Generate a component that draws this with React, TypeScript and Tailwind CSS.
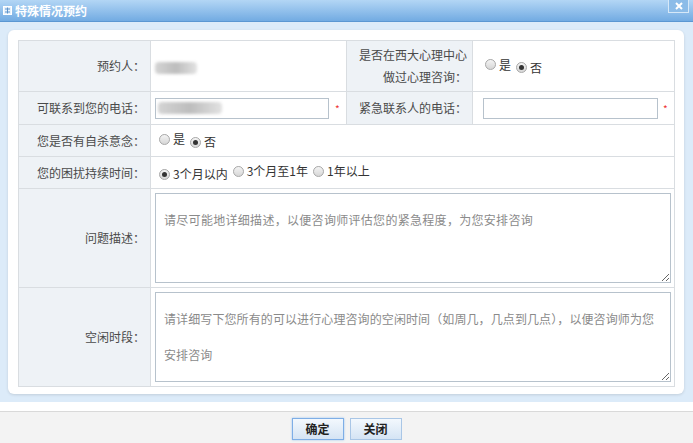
function Radio({ checked, label }: { checked?: boolean; label: string }) {
  return (
    <label className="inline-flex items-center mr-[5px]">
      <span className="w-[11px] h-[11px] rounded-full border border-[#a9a9a9] bg-gradient-to-b from-[#f4f4f4] to-[#d6d6d6] flex items-center justify-center mr-[3px]">
        {checked && <span className="w-[5px] h-[5px] rounded-full bg-[#333]" />}
      </span>
      <span>{label}</span>
    </label>
  );
}

function Blur({ w }: { w: number }) {
  return (
    <span
      className="inline-block h-[12px] bg-gradient-to-r from-[#d4d4d4] via-[#bdbdbd] to-[#e2e2e2] blur-[1.5px] rounded-sm align-middle"
      style={{ width: w }}
    />
  );
}

export default function App() {
  const label = 'bg-[#eef2f6] border border-[#d9dde1] text-right pr-[5px] text-[#4a4a4a]';
  const cell = 'border border-[#d9dde1] pl-[4px] text-[#333]';
  const area =
    'block w-[516px] h-[90px] border border-[#b7c2cc] px-[8px] py-[8px] leading-[36px] text-[12px] outline-none resize-y placeholder:text-[#8a8a8a]';

  return (
    <div
      className="w-[693px] h-[443px] flex flex-col bg-[#f3f3f3] text-[12px] overflow-hidden"
      style={{ fontFamily: '"Noto Sans CJK SC", "Noto Sans", sans-serif' }}
    >
      {/* title bar */}
      <div className="h-[22px] shrink-0 flex items-center justify-between bg-gradient-to-b from-[#b3d6f5] to-[#72abe2] border-b border-[#5b97d2] pl-[3px] pr-[4px]">
        <div className="flex items-center gap-[3px]">
          <svg width="9" height="9" viewBox="0 0 9 9">
            <rect x="0.5" y="0.5" width="8" height="8" fill="#e8f2fc" stroke="#fff" />
            <path d="M2 3h5M2 6h5M4.5 1.5v6" stroke="#5d94cc" strokeWidth="1" />
          </svg>
          <span className="text-white font-bold text-[12px] leading-none">特殊情况预约</span>
        </div>
        <div className="self-start w-[21px] h-[13px] border border-[#d6e8f8] border-t-0 bg-[#8cbce8] flex items-center justify-center">
          <svg width="8" height="8" viewBox="0 0 8 8">
            <path d="M1 1L7 7M7 1L1 7" stroke="#fff" strokeWidth="2" />
          </svg>
        </div>
      </div>

      {/* body */}
      <div className="h-[380px] shrink-0 bg-[#dcebf9] pl-[8px] pr-[9px] pt-[8px] pb-[8px]">
        <div className="h-full bg-white rounded-[6px] shadow-[0_1px_3px_rgba(0,0,0,0.12)] px-[10px] pt-[10px]">
          <table className="w-[656px] border-collapse table-fixed">
            <colgroup>
              <col className="w-[132px]" />
              <col className="w-[196px]" />
              <col className="w-[126px]" />
              <col className="w-[202px]" />
            </colgroup>
            <tbody>
              <tr className="h-[51px]">
                <td className={label}>预约人：</td>
                <td className={cell}>
                  <Blur w={42} />
                </td>
                <td className={label + ' leading-[22px]'}>
                  是否在西大心理中心
                  <br />
                  做过心理咨询：
                </td>
                <td className={cell + ' pl-[12px]'}>
                  <Radio label="是" />
                  <Radio checked label="否" />
                </td>
              </tr>
              <tr className="h-[33px]">
                <td className={label}>可联系到您的电话：</td>
                <td className={cell}>
                  <div className="flex items-center">
                    <div className="w-[174px] h-[21px] border border-[#b7c2cc] flex items-center pl-[2px]">
                      <Blur w={64} />
                    </div>
                    <span className="text-[#e33] text-[10px] ml-[6px]">*</span>
                  </div>
                </td>
                <td className={label}>紧急联系人的电话：</td>
                <td className={cell + ' pl-[10px]'}>
                  <div className="flex items-center">
                    <input className="w-[175px] h-[21px] border border-[#b7c2cc] outline-none" />
                    <span className="text-[#e33] text-[10px] ml-[5px]">*</span>
                  </div>
                </td>
              </tr>
              <tr className="h-[32px]">
                <td className={label}>您是否有自杀意念：</td>
                <td className={cell + ' pl-[8px]'} colSpan={3}>
                  <Radio label="是" />
                  <Radio checked label="否" />
                </td>
              </tr>
              <tr className="h-[32px]">
                <td className={label}>您的困扰持续时间：</td>
                <td className={cell + ' pl-[8px]'} colSpan={3}>
                  <Radio checked label="3个月以内" />
                  <Radio label="3个月至1年" />
                  <Radio label="1年以上" />
                </td>
              </tr>
              <tr className="h-[98px]">
                <td className={label}>问题描述：</td>
                <td className={cell + ' py-[4px]'} colSpan={3}>
                  <textarea
                    className={area + ' tracking-[0.3px]'}
                    placeholder="请尽可能地详细描述，以便咨询师评估您的紧急程度，为您安排咨询"
                  />
                </td>
              </tr>
              <tr className="h-[98px]">
                <td className={label}>空闲时段：</td>
                <td className={cell + ' py-[4px]'} colSpan={3}>
                  <textarea
                    className={area + ' tracking-[0.1px]'}
                    placeholder="请详细写下您所有的可以进行心理咨询的空闲时间（如周几，几点到几点），以便咨询师为您安排咨询"
                  />
                </td>
              </tr>
            </tbody>
          </table>
        </div>
      </div>

      {/* footer */}
      <div className="h-[10px] shrink-0 bg-white border-b border-[#d9d9d9]" />
      <div className="flex-1 flex justify-center items-start pt-[6px] gap-[6px]">
        <button className="w-[52px] h-[22px] border border-[#7eaee6] shadow-[0_0_2px_#9cc3ef] bg-gradient-to-b from-[#f3f8fd] to-[#d5e4f4] text-[#222] text-[12px] font-bold">
          确定
        </button>
        <button className="w-[52px] h-[22px] border border-[#a9c6e6] bg-gradient-to-b from-[#f3f8fd] to-[#d5e4f4] text-[#222] text-[12px] font-bold">
          关闭
        </button>
      </div>
    </div>
  );
}
